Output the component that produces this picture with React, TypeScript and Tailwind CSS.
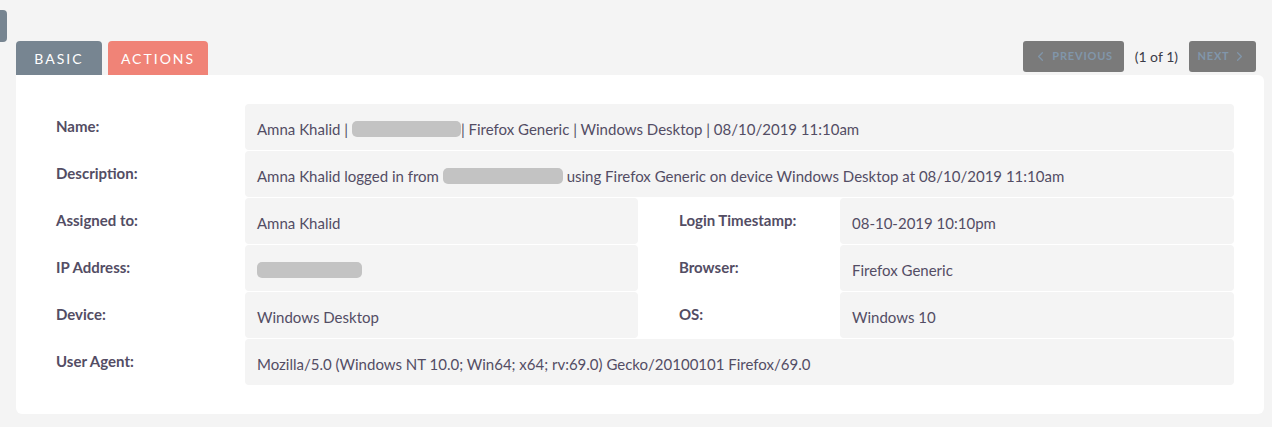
import { ChevronLeft, ChevronRight } from 'lucide-react';

const Redacted = ({ width }: { width: number }) => (
  <span
    className="inline-block h-[16px] rounded-[5px] bg-[#c3c3c3] align-[-3px] blur-[0.4px]"
    style={{ width }}
  />
);

const Label = ({ children, className = '' }: { children: React.ReactNode; className?: string }) => (
  <div className={`flex items-center pb-[2px] text-[15px] font-bold text-[#534d64] ${className}`}>
    {children}
  </div>
);

const Value = ({ children, className = '' }: { children: React.ReactNode; className?: string }) => (
  <div
    className={`flex h-[46px] items-center whitespace-pre rounded-[4px] bg-[#f4f4f4] px-[12px] pt-[4px] text-[15px] text-[#534d64] ${className}`}
  >
    {children}
  </div>
);

export default function App() {
  return (
    <div className="relative min-h-[427px] w-full bg-[#f4f4f4] font-['Lato',sans-serif]">
      <div className="absolute left-0 top-[10px] h-[32px] w-[7px] rounded-r-[4px] bg-[#778591]" />

      <div className="pl-[16px] pr-[8px] pt-[41px]">
        <div className="flex items-start justify-between">
          <div className="flex gap-[6px]">
            <div className="flex h-[34px] w-[86px] items-center justify-center rounded-t-[4px] bg-[#778591] text-[14px] tracking-[2px] text-white">
              BASIC
            </div>
            <div className="flex h-[34px] w-[100px] items-center justify-center rounded-t-[4px] bg-[#f08377] text-[14px] tracking-[2px] text-white">
              ACTIONS
            </div>
          </div>
          <div className="flex items-center gap-[11px] pr-[8px]">
            <div className="flex h-[31px] w-[101px] items-center justify-center gap-[4px] rounded-[3px] bg-[#7a7a7a] text-[11px] font-bold tracking-[0.8px] text-[#8196aa]">
              <ChevronLeft size={15} strokeWidth={2} />
              PREVIOUS
            </div>
            <span className="text-[14px] text-[#3b3b48]">(1 of 1)</span>
            <div className="flex h-[31px] w-[67px] items-center justify-center gap-[3px] rounded-[3px] bg-[#7a7a7a] text-[11px] font-bold tracking-[0.8px] text-[#8196aa]">
              NEXT
              <ChevronRight size={15} strokeWidth={2} />
            </div>
          </div>
        </div>

        <div className="rounded-b-[6px] rounded-tr-[6px] bg-white pb-[29px] pl-[40px] pr-[30px] pt-[29px]">
          <div className="flex flex-col gap-[1px]">
            <div className="flex">
              <Label className="w-[189px]">Name:</Label>
              <Value className="flex-1">
                Amna Khalid | <Redacted width={109} />| Firefox Generic | Windows Desktop | 08/10/2019 11:10am
              </Value>
            </div>
            <div className="flex">
              <Label className="w-[189px]">Description:</Label>
              <Value className="flex-1">
                Amna Khalid logged in from <Redacted width={120} /> using Firefox Generic on device Windows Desktop at 08/10/2019 11:10am
              </Value>
            </div>
            <div className="flex">
              <Label className="w-[189px]">Assigned to:</Label>
              <Value className="w-[393px]">Amna Khalid</Value>
              <Label className="w-[202px] pl-[41px]">Login Timestamp:</Label>
              <Value className="flex-1">08-10-2019 10:10pm</Value>
            </div>
            <div className="flex">
              <Label className="w-[189px]">IP Address:</Label>
              <Value className="w-[393px]">
                <Redacted width={105} />
              </Value>
              <Label className="w-[202px] pl-[41px]">Browser:</Label>
              <Value className="flex-1">Firefox Generic</Value>
            </div>
            <div className="flex">
              <Label className="w-[189px]">Device:</Label>
              <Value className="w-[393px]">Windows Desktop</Value>
              <Label className="w-[202px] pl-[41px]">OS:</Label>
              <Value className="flex-1">Windows 10</Value>
            </div>
            <div className="flex">
              <Label className="w-[189px]">User Agent:</Label>
              <Value className="flex-1">
                Mozilla/5.0 (Windows NT 10.0; Win64; x64; rv:69.0) Gecko/20100101 Firefox/69.0
              </Value>
            </div>
          </div>
        </div>
      </div>
    </div>
  );
}
